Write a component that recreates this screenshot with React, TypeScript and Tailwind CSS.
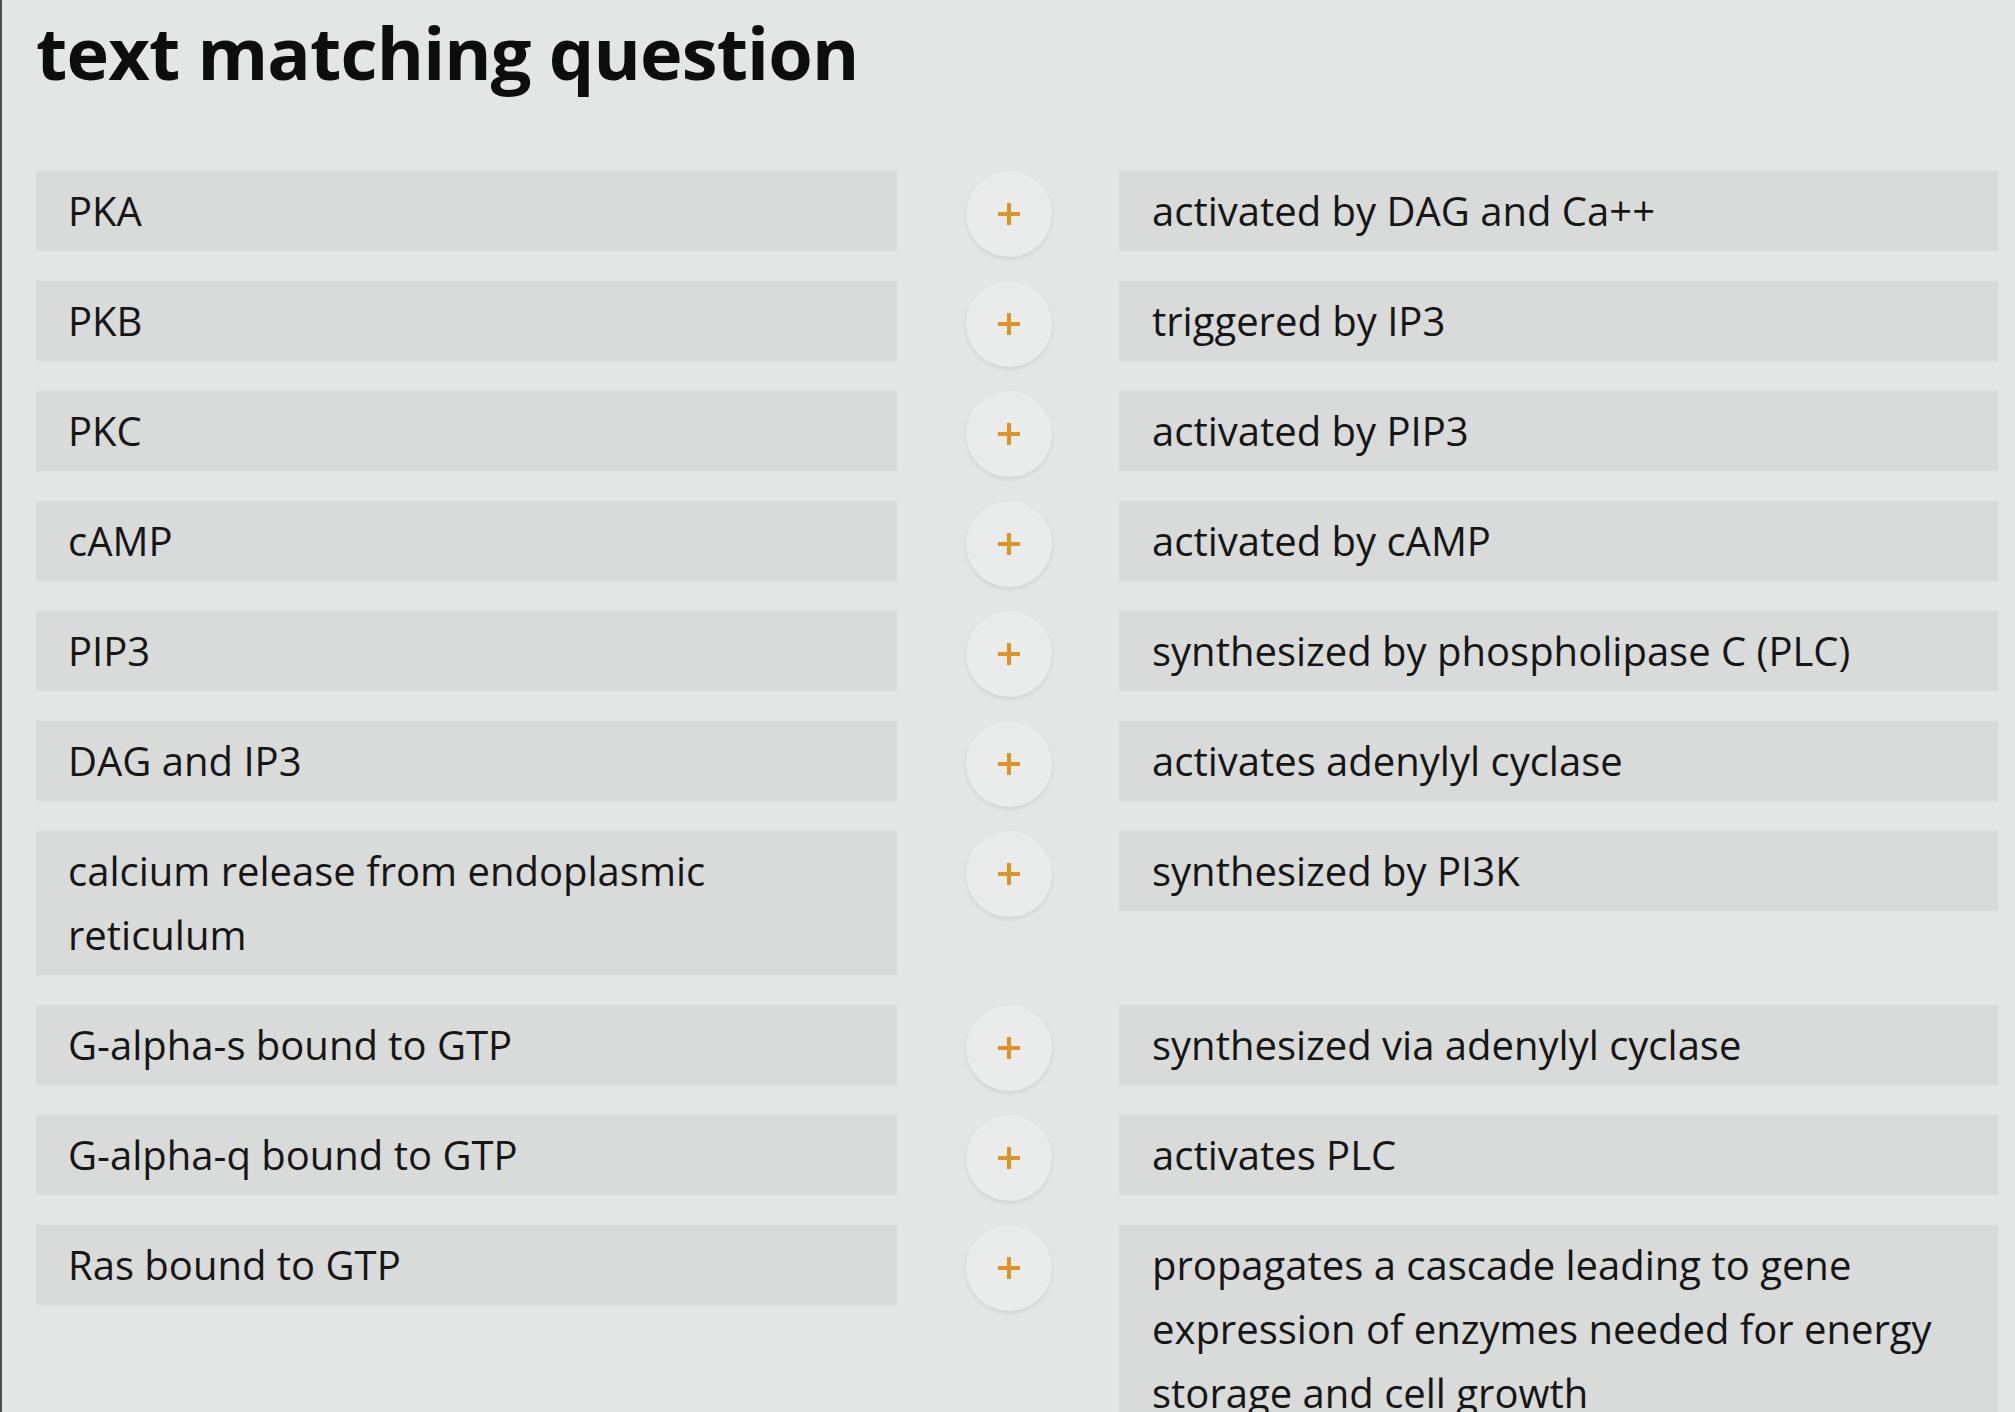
import React from 'react';

type Pair = { term: string; match: string };

const pairs: Pair[] = [
  { term: 'PKA', match: 'activated by DAG and Ca++' },
  { term: 'PKB', match: 'triggered by IP3' },
  { term: 'PKC', match: 'activated by PIP3' },
  { term: 'cAMP', match: 'activated by cAMP' },
  { term: 'PIP3', match: 'synthesized by phospholipase C (PLC)' },
  { term: 'DAG and IP3', match: 'activates adenylyl cyclase' },
  { term: 'calcium release from endoplasmic reticulum', match: 'synthesized by PI3K' },
  { term: 'G-alpha-s bound to GTP', match: 'synthesized via adenylyl cyclase' },
  { term: 'G-alpha-q bound to GTP', match: 'activates PLC' },
  {
    term: 'Ras bound to GTP',
    match: 'propagates a cascade leading to gene expression of enzymes needed for energy storage and cell growth',
  },
];

function PlusButton() {
  return (
    <div className="flex h-[80px] w-[88px] shrink-0 items-center justify-center">
      <button
        type="button"
        className="mt-[6px] flex h-[86px] w-[86px] items-center justify-center rounded-full bg-[#eaeceb] shadow-[0_2px_4px_rgba(0,0,0,0.09)]"
      >
        <svg width="24" height="24" viewBox="0 0 24 24">
          <path d="M12 1v22M1 12h22" stroke="#dc9327" strokeWidth="4" />
        </svg>
      </button>
    </div>
  );
}

export default function App() {
  return (
    <div
      className="min-h-screen border-l-2 border-[#4d4d4d] bg-[#e4e6e5] pl-[34px] pt-[16px] text-[#161616]"
      style={{ fontFamily: '"Open Sans", "Noto Sans", sans-serif' }}
    >
      <h1 className="text-[72px] font-bold leading-[72px] tracking-[-0.8px] text-[#0d0d0d]">
        text matching question
      </h1>

      <div className="mt-[83px] flex flex-col gap-[30px]">
        {pairs.map((p) => (
          <div key={p.term} className="flex items-start">
            <div className="w-[861px] shrink-0 bg-[#d9dbda] py-2 pl-[32px] pr-[60px] text-[40px] leading-[64px]">
              {p.term}
            </div>
            <div className="ml-[68px] mr-[66px]">
              <PlusButton />
            </div>
            <div className="w-[879px] shrink-0 bg-[#d9dbda] py-2 pl-[33px] pr-[40px] text-[40px] leading-[64px]">
              {p.match}
            </div>
          </div>
        ))}
      </div>
    </div>
  );
}
